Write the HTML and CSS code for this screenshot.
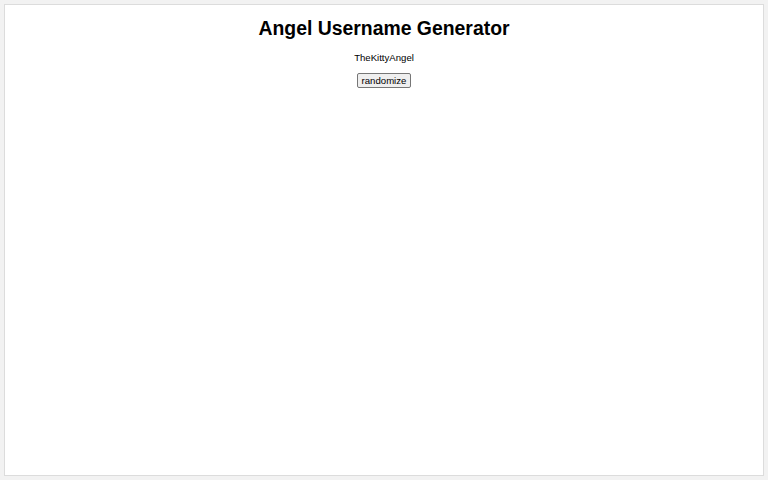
FILE: index.html
```html
<!DOCTYPE html>
<html lang="en">
<head>
    <meta charset="UTF-8">
    <title>Angel Username Generator</title>
    <link rel="stylesheet" href="styles.css">
</head>
<body>
    <div class="container">
        <h1>Angel Username Generator</h1>
        <p id="username">TheKittyAngel</p>
        <button class="button" onclick="randomize()">randomize</button>
    </div>

    <script>
        const words = ["Kitty", "Star", "Moon", "Honey", "Cloud", "Peach", "Lily", "Sugar"];
        function randomize() {
            const w = words[Math.floor(Math.random() * words.length)];
            document.getElementById('username').textContent = "The" + w + "Angel";
        }
    </script>
</body>
</html>
```

FILE: styles.css
```css
body {
    font-family: "Liberation Sans", Arial, sans-serif;
    background-color: #f2f2f2;
    margin: 0;
    padding: 4px;
    height: 100vh;
    box-sizing: border-box;
}
.container {
    background: white;
    border: 1px solid #dcdcdc;
    height: 100%;
    box-sizing: border-box;
    text-align: center;
    padding-top: 12px;
}
h1 {
    font-size: 19.4px;
    margin: 0 0 12px;
}
#username {
    font-size: 9.6px;
    margin: 0 0 7px;
}
.button {
    font-family: "Liberation Sans", Arial, sans-serif;
    font-size: 9.6px;
    padding: 1px 4px;
    background: #efefef;
    border: 1px solid #767676;
    border-radius: 2px;
}
```
